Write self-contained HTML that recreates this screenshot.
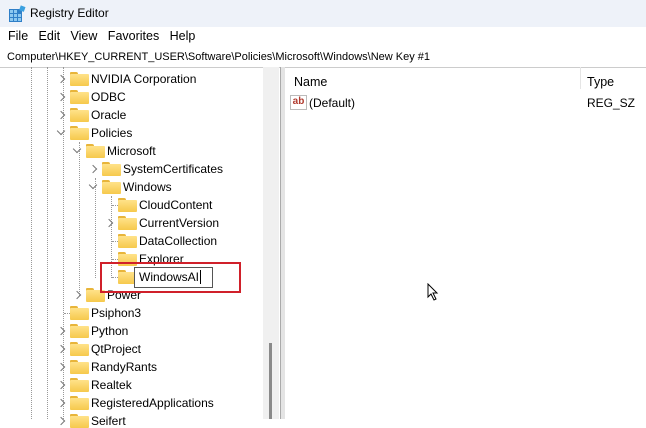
<!DOCTYPE html><html><head><style>
body{margin:0;width:646px;height:419px;overflow:hidden;background:#fff;font-family:"Liberation Sans",sans-serif;font-size:12px;color:#000;position:relative}
.a{position:absolute;white-space:nowrap}
.f{position:absolute;width:19px;height:14px}
.f:before{content:"";position:absolute;left:0;top:0;width:8px;height:4px;background:#e8b53a;border-radius:1px 2px 0 0}
.f:after{content:"";position:absolute;left:0;top:2px;width:19px;height:12px;background:linear-gradient(#ffe28a,#f6c94c);border-radius:1px}
.c{position:absolute;width:5px;height:5px;border-right:1.3px solid #777;border-bottom:1.3px solid #777}
.r{transform:rotate(-45deg)}.d{transform:rotate(45deg)}
.v{position:absolute;border-left:1px dotted #999;width:0}
.h{position:absolute;border-top:1px dotted #999;height:0}
</style></head><body>
<div class="a" style="left:0;top:0;width:646px;height:27px;background:#eef2f9"></div>
<svg class="a" style="left:8px;top:5px" width="18" height="18"><rect x="1" y="4" width="13" height="13" fill="#2f7fc8"/><g fill="#8cc8f0"><rect x="2" y="5" width="3" height="3"/><rect x="6" y="5" width="3" height="3"/><rect x="2" y="9" width="3" height="3"/><rect x="6" y="9" width="3" height="3"/><rect x="10" y="9" width="3" height="3"/><rect x="2" y="13" width="3" height="3"/><rect x="6" y="13" width="3" height="3"/><rect x="10" y="13" width="3" height="3"/></g><rect x="12" y="1" width="5" height="5" fill="#3aa0e0" transform="rotate(20 14 3)"/></svg>
<div class="a" style="left:30px;top:6px;font-size:12px">Registry Editor</div>
<div class="a" style="left:0;top:27px;width:646px;height:19px;background:#fff"></div>
<div class="a" style="left:8px;top:29px;font-size:12.5px">File&nbsp;&nbsp;&nbsp;Edit&nbsp;&nbsp;&nbsp;View&nbsp;&nbsp;&nbsp;Favorites&nbsp;&nbsp;&nbsp;Help</div>
<div class="a" style="left:0;top:47px;width:646px;height:20px;background:#fff;border-bottom:1px solid #ccc"></div>
<div class="a" style="left:7px;top:51px;font-size:11px">Computer\HKEY_CURRENT_USER\Software\Policies\Microsoft\Windows\New Key #1</div>
<div class="a" style="left:263px;top:67px;width:16px;height:352px;background:#f0f0f0"></div>
<div class="a" style="left:269px;top:343px;width:3px;height:76px;background:#8a8a8a"></div>
<div class="a" style="left:280px;top:67px;width:4px;height:352px;background:#e4e4e4;border-left:1px solid #aaa"></div>
<div class="v" style="left:31px;top:67px;height:352px"></div>
<div class="v" style="left:47px;top:67px;height:352px"></div>
<div class="v" style="left:63px;top:67px;height:352px"></div>
<div class="v" style="left:79px;top:142px;height:154px"></div>
<div class="v" style="left:95px;top:178px;height:100px"></div>
<div class="v" style="left:111px;top:196px;height:82px"></div>
<div class="h" style="left:112px;top:205px;width:6px"></div>
<div class="h" style="left:112px;top:241px;width:6px"></div>
<div class="h" style="left:112px;top:259px;width:6px"></div>
<div class="h" style="left:112px;top:277px;width:6px"></div>
<div class="h" style="left:64px;top:313px;width:6px"></div>
<div id="t"></div>
<div class="a" style="left:100px;top:262px;width:137px;height:27px;border:2px solid #d0202a"></div>
<div class="a" style="left:134px;top:267px;width:77px;height:19px;border:1px solid #555;background:#fff"></div>
<div class="a" style="left:139px;top:270px;font-size:12px">WindowsAI<span style="border-left:1px solid #000;margin-left:1px"></span></div>
<div class="a" style="left:294px;top:75px;font-size:12.5px">Name</div>
<div class="a" style="left:580px;top:67px;width:1px;height:22px;background:#e5e5e5"></div>
<div class="a" style="left:587px;top:75px;font-size:12.5px">Type</div>
<div class="a" style="left:290px;top:95px;width:15px;height:13px;border:1px solid #bbb;background:#fff;color:#b03a2e;font-size:10px;font-weight:bold;line-height:12px;text-align:center">ab</div>
<div class="a" style="left:309px;top:96px;font-size:12px">(Default)</div>
<div class="a" style="left:587px;top:96px;font-size:12px">REG_SZ</div>
<svg class="a" style="left:427px;top:283px" width="12" height="18"><path d="M1 1 L1 14 L4 11 L7 17 L9 16 L6 10 L10 10 Z" fill="#fff" stroke="#000"/></svg>
<script>
var rows=[["NVIDIA Corporation",0,"r"],["ODBC",0,"r"],["Oracle",0,"r"],["Policies",0,"d"],["Microsoft",1,"d"],["SystemCertificates",2,"r"],["Windows",2,"d"],["CloudContent",3,""],["CurrentVersion",3,"r"],["DataCollection",3,""],["Explorer",3,""],["",3,""],["Power",1,"r"],["Psiphon3",0,""],["Python",0,"r"],["QtProject",0,"r"],["RandyRants",0,"r"],["Realtek",0,"r"],["RegisteredApplications",0,"r"],["Seifert",0,"r"]];
var h="";rows.forEach(function(r,i){var y=79+i*18,x=70+r[1]*16;
if(r[2])h+='<div class="c '+r[2]+'" style="left:'+(x-12)+'px;top:'+(y-(r[2]=="d"?5:3))+'px"></div>';
h+='<div class="f" style="left:'+x+'px;top:'+(y-7)+'px"></div>';
if(r[0])h+='<div class="a" style="left:'+(x+21)+'px;top:'+(y-7)+'px;font-size:12px">'+r[0]+'</div>';});
document.getElementById("t").innerHTML=h;
</script>
</body></html>
